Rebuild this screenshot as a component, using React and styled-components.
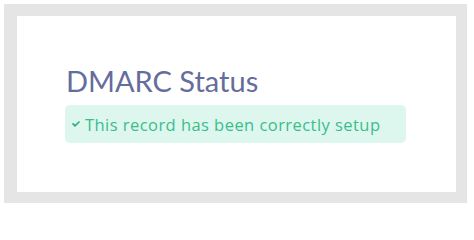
import React from "react";
import styled, { createGlobalStyle } from "styled-components";

const Global = createGlobalStyle`
  html, body { margin: 0; padding: 0; background: #ffffff; }
  body { font-family: "Lato", "Open Sans", sans-serif; }
`;

const Frame = styled.div`
  box-sizing: border-box;
  margin: 4px;
  width: 463px;
  height: 199px;
  background: #e6e5e6;
  padding: 12px 11px 11px 13px;
  display: flex;
`;

const Card = styled.div`
  flex: 1;
  background: #ffffff;
  padding: 47px 0 0 48px;
  display: flex;
  flex-direction: column;
  align-items: flex-start;
  gap: 7px;
`;

const Title = styled.h2`
  margin: 0 0 0 1px;
  font-family: "Lato", sans-serif;
  font-weight: 400;
  font-size: 29px;
  line-height: 35px;
  color: #646d9c;
`;

const Alert = styled.div`
  box-sizing: border-box;
  width: 341px;
  height: 38px;
  border-radius: 5px;
  background: #ddf7ef;
  color: #3bbd8b;
  display: flex;
  align-items: center;
  gap: 5px;
  padding-left: 7px;
  font-family: "Open Sans", sans-serif;
  font-size: 16.5px;
  letter-spacing: 0.45px;
`;

const Check = () => (
  <svg width="8" height="6" viewBox="0 0 8 6" fill="none">
    <path d="M1 2.8 L3 4.8 L7 1" stroke="#2fae7e" strokeWidth="1.7" strokeLinecap="round" strokeLinejoin="round" />
  </svg>
);

export default function App() {
  return (
    <>
      <Global />
      <Frame>
        <Card>
          <Title>DMARC Status</Title>
          <Alert>
            <Check />
            <span>This record has been correctly setup</span>
          </Alert>
        </Card>
      </Frame>
    </>
  );
}
